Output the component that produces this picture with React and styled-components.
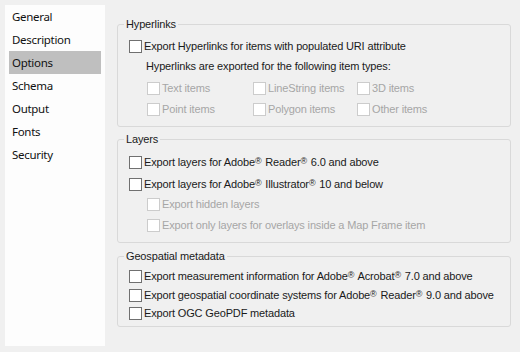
import React from 'react'
import styled, { createGlobalStyle } from 'styled-components'

const Global = createGlobalStyle`
  html, body {
    margin: 0;
    padding: 0;
    background: #f0f0f0;
  }
`;

const Window = styled.div`
  display: flex;
  width: 520px;
  height: 352px;
  box-sizing: border-box;
  padding: 5px;
  background: #f0f0f0;
`;

const Sidebar = styled.div`
  width: 100px;
  height: 341px;
  box-sizing: border-box;
  padding: 0 4px;
  background: #fdfdfd;
  flex-shrink: 0;
`;

const NavItem = styled.div`
  height: 23px;
  line-height: 23px;
  padding-left: 3px;
  font-family: "Segoe UI", "Noto Sans", sans-serif;
  font-size: 11.5px;
  letter-spacing: -0.3px;
  color: #111;
  background: ${p => (p.active ? '#bfbfbf' : 'transparent')};
`;

const Content = styled.div`
  display: flex;
  flex-direction: column;
  width: 394px;
  margin-left: 12px;
  padding-top: 13px;
`;

const Group = styled.fieldset`
  margin: 0 0 ${p => p.gap || 0}px 0;
  padding: 0 0 ${p => p.bottom}px 5px;
  border: 1px solid #d9d9d9;
  border-radius: 3px;
  font-family: "Liberation Sans", Arial, sans-serif;
  font-size: 11px;
  letter-spacing: -0.15px;
`;

const Legend = styled.legend`
  padding: 0 2px;
  margin-left: 1px;
  line-height: 13px;
  color: #1a1a1a;
`;

const Body = styled.div`
  display: flex;
  flex-direction: column;
  padding-left: 6px;
  margin-top: ${p => p.top}px;
`;

const Row = styled.label`
  display: flex;
  align-items: center;
  height: 20px;
  margin-top: ${p => p.mt || 0}px;
  margin-left: ${p => (p.indent ? 18 : 0)}px;
  color: ${p => (p.disabled ? '#a6a6a6' : '#1a1a1a')};
  white-space: pre;
`;

const Box = styled.span`
  width: 13px;
  height: 13px;
  box-sizing: border-box;
  flex-shrink: 0;
  margin-right: 2px;
  background: #fff;
  border: 1px solid ${p => (p.disabled ? '#cccccc' : '#707070')};
`;

const Reg = styled.span`
  font-size: 9px;
  position: relative;
  top: -2px;
  margin: 0 1px 0 0;
`;

const Note = styled.div`
  height: 20px;
  line-height: 20px;
  padding-left: 17px;
  color: #1a1a1a;
  white-space: nowrap;
`;

const TypeGrid = styled.div`
  display: grid;
  grid-template-columns: 106px 104px 1fr;
  row-gap: 1px;
  margin-top: 2px;
  margin-left: 18px;
`;

const Check = ({ children, disabled, indent, mt }) => (
  <Row disabled={disabled} indent={indent} mt={mt}>
    <Box disabled={disabled} />
    <span>{children}</span>
  </Row>
);

const R = () => <Reg>®</Reg>;

const nav = ['General', 'Description', 'Options', 'Schema', 'Output', 'Fonts', 'Security'];
const types = ['Text items', 'LineString items', '3D items', 'Point items', 'Polygon items', 'Other items'];

export default function App() {
  return (
    <Window>
      <Global />
      <Sidebar>
        {nav.map(n => (
          <NavItem key={n} active={n === 'Options'}>{n}</NavItem>
        ))}
      </Sidebar>
      <Content>
        <Group bottom={7} gap={6}>
          <Legend>Hyperlinks</Legend>
          <Body top={5}>
            <Check>Export Hyperlinks for items with populated URI attribute</Check>
            <Note>Hyperlinks are exported for the following item types:</Note>
            <TypeGrid>
              {types.map(t => (
                <Check key={t} disabled>{t}</Check>
              ))}
            </TypeGrid>
          </Body>
        </Group>
        <Group bottom={7} gap={7}>
          <Legend>Layers</Legend>
          <Body top={6}>
            <Check>Export layers for Adobe<R /> Reader<R /> 6.0 and above</Check>
            <Check mt={2}>Export layers for Adobe<R /> Illustrator<R /> 10 and below</Check>
            <Check indent disabled>Export hidden layers</Check>
            <Check indent disabled mt={1}>Export only layers for overlays inside a Map Frame item</Check>
          </Body>
        </Group>
        <Group bottom={3}>
          <Legend>Geospatial metadata</Legend>
          <Body top={3}>
            <Check>Export measurement information for Adobe<R /> Acrobat<R /> 7.0 and above</Check>
            <Check mt={-1}>Export geospatial coordinate systems for Adobe<R /> Reader<R /> 9.0 and above</Check>
            <Check mt={-2}>Export OGC GeoPDF metadata</Check>
          </Body>
        </Group>
      </Content>
    </Window>
  );
}
